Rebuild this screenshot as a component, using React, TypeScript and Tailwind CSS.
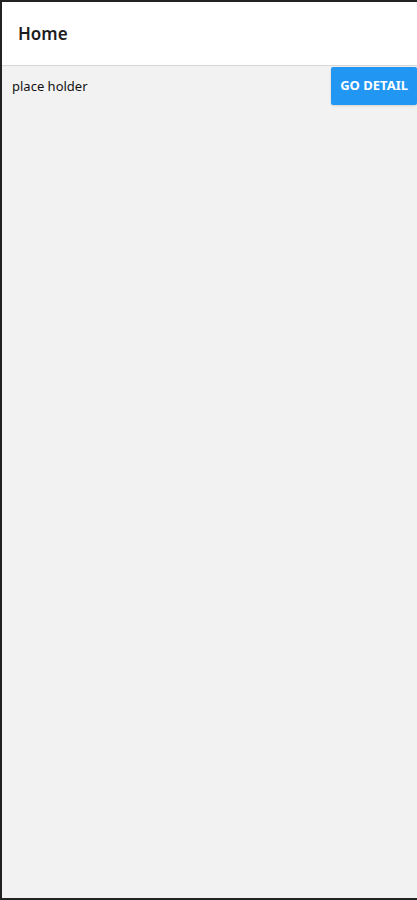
export default function App() {
  return (
    <div
      className="flex h-[900px] w-full flex-col border-t-2 border-b-2 border-l-2 border-[#222222] bg-[#f2f2f2]"
      style={{ fontFamily: '"Noto Sans", "Open Sans", sans-serif' }}
    >
      {/* Header */}
      <div className="flex h-[64px] items-center border-b border-[#d8d8d8] bg-white pl-4">
        <h1 className="text-[17px] font-semibold text-[#1c1c1e]">Home</h1>
      </div>

      {/* Content row */}
      <div className="flex items-start justify-between">
        <span className="pl-[10px] pt-[11px] text-[13px] text-[#111111]">place holder</span>
        <button className="mt-px h-[38px] rounded-[2px] bg-[#2196f3] px-[9px] text-[13px] font-bold text-white shadow-sm">
          GO DETAIL
        </button>
      </div>
    </div>
  );
}
